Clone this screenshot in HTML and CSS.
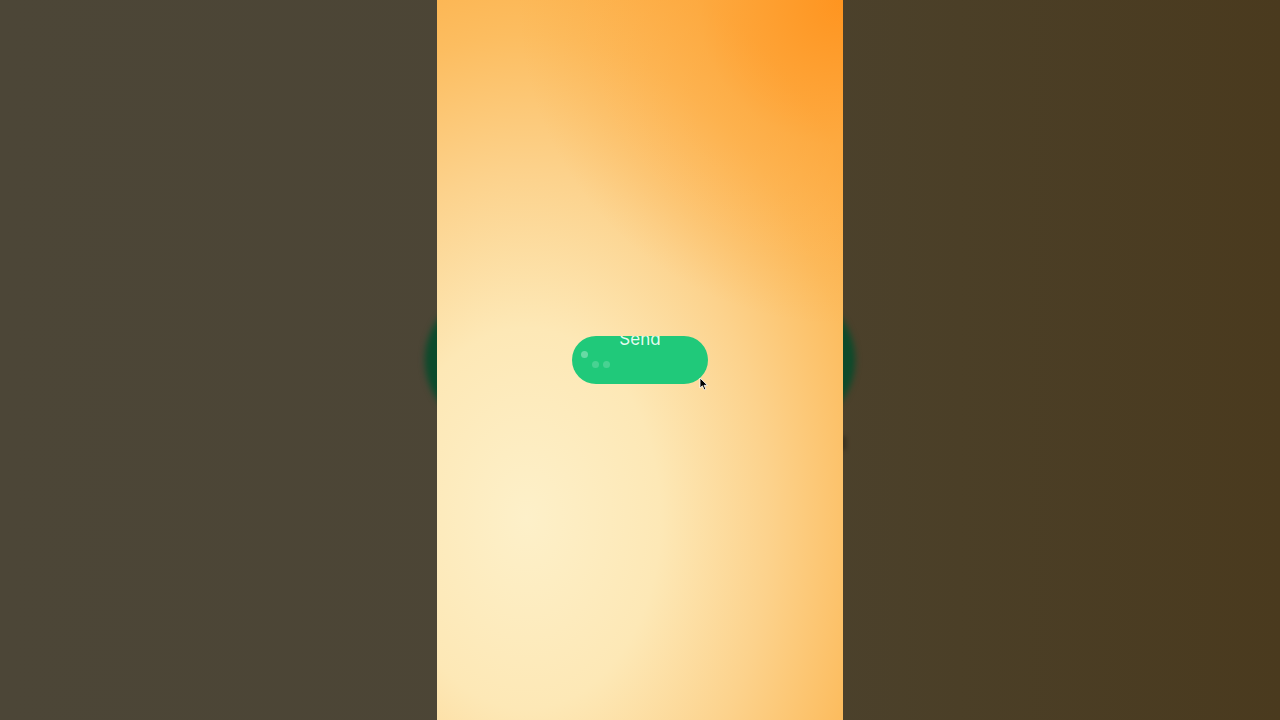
FILE: index.html
```html
<!DOCTYPE html>
<html lang="en">
<head>
<meta charset="utf-8">
<title>Send button</title>
<link rel="stylesheet" href="styles.css">
</head>
<body>
<div class="stage">
  <div class="backdrop" aria-hidden="true">
    <div class="backdrop-pill"></div>
    <div class="backdrop-cursor"></div>
  </div>
  <main class="video">
    <button class="send-btn" type="button">
      <span class="send-label">Send</span>
      <span class="dot dot-a"></span>
      <span class="dot dot-b"></span>
      <span class="dot dot-c"></span>
    </button>
    <svg class="cursor" width="10" height="14" viewBox="0 0 10 14" aria-hidden="true">
      <path d="M1 1 L1 11 L3.4 8.8 L5.2 12.8 L6.8 12.1 L5.1 8.3 L8.4 8.3 Z" fill="#000" stroke="#fff" stroke-width="0.8" stroke-linejoin="round"/>
    </svg>
  </main>
</div>
</body>
</html>
```

FILE: styles.css
```css
html, body {
  margin: 0;
  padding: 0;
  width: 1280px;
  height: 720px;
  overflow: hidden;
  font-family: Inter, Roboto, "Liberation Sans", sans-serif;
}

.stage {
  position: relative;
  width: 1280px;
  height: 720px;
  display: flex;
  justify-content: center;
  background: linear-gradient(90deg, #4c4637 0%, #4c4535 45%, #4b3f27 75%, #4a3a1e 100%);
  overflow: hidden;
}

.backdrop {
  position: absolute;
  inset: 0;
  z-index: 0;
}

.backdrop-pill {
  position: absolute;
  left: 425px;
  top: 290px;
  width: 430px;
  height: 140px;
  border-radius: 70px;
  background: #0b4a2b;
  filter: blur(3px);
}

.backdrop-cursor {
  position: absolute;
  left: 841px;
  top: 436px;
  width: 5px;
  height: 14px;
  background: #2a2418;
  filter: blur(2px);
  opacity: 0.6;
}

.video {
  position: relative;
  z-index: 1;
  width: 406px;
  height: 720px;
  display: flex;
  align-items: center;
  justify-content: center;
  background:
    radial-gradient(ellipse 80% 45% at 100% 0%, rgba(255, 146, 28, 0.92) 0%, rgba(255, 160, 50, 0.45) 45%, rgba(255, 170, 60, 0) 100%),
    radial-gradient(ellipse 100% 80% at 22% 72%, #fdf0c9 0%, #fde8b6 33%, #fcd28c 60%, #fcbd60 84%, #fcb24c 100%);
}

.send-btn {
  position: relative;
  width: 136px;
  height: 48px;
  border: none;
  border-radius: 24px;
  background: #20c97a;
  padding: 0;
  overflow: hidden;
  cursor: default;
}

.send-label {
  position: absolute;
  left: 0;
  right: 0;
  top: -7px;
  text-align: center;
  font-family: Inter, Roboto, "Liberation Sans", sans-serif;
  font-size: 17px;
  line-height: 20px;
  color: rgba(245, 255, 248, 0.95);
}

.dot {
  position: absolute;
  width: 7px;
  height: 7px;
  border-radius: 50%;
}

.dot-a {
  left: 9px;
  top: 15px;
  background: rgba(255, 255, 255, 0.32);
}

.dot-b {
  left: 20px;
  top: 25px;
  background: rgba(255, 255, 255, 0.18);
}

.dot-c {
  left: 31px;
  top: 25px;
  background: rgba(255, 255, 255, 0.18);
}

.cursor {
  position: absolute;
  left: 262px;
  top: 377px;
}
```
